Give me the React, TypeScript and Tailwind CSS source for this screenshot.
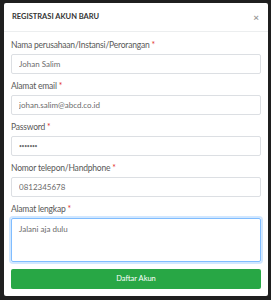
const FIELDS = [
  { label: "Nama perusahaan/Instansi/Perorangan", value: "Johan Salim", type: "text" },
  { label: "Alamat email", value: "johan.salim@abcd.co.id", type: "text" },
  { label: "Password", value: "1234567", type: "password" },
  { label: "Nomor telepon/Handphone", value: "0812345678", type: "text" },
];

function Label({ text }: { text: string }) {
  return (
    <label className="mb-[3px] block h-3 text-[8.5px] leading-3 tracking-[-0.2px] text-[#585858]">
      {text} <span className="text-[#e3342f]">*</span>
    </label>
  );
}

export default function App() {
  return (
    <div className="h-[300px] w-[271px] bg-[#1f1f1f] pl-1 pt-[3px] font-['Lato',sans-serif]">
      <div className="w-[264px] rounded-[2px] bg-white">
        <div className="flex h-[29px] items-center justify-between border-b border-[#eceeef] pl-2 pr-[9px]">
          <h2 className="text-[7.5px] font-bold text-[#333]">REGISTRASI AKUN BARU</h2>
          <span className="text-[10px] font-bold leading-none text-[#999]">×</span>
        </div>
        <div className="flex flex-col gap-[6px] px-[7px] pb-[7px] pt-[7px]">
          {FIELDS.map((f) => (
            <div key={f.label}>
              <Label text={f.label} />
              <input
                type={f.type}
                defaultValue={f.value}
                className={`block h-5 w-full rounded-[2px] border border-[#dcdfe3] px-[7px] text-[#6b6b6b] outline-none ${
                  f.type === "password" ? "text-[5px] tracking-[-0.3px]" : "text-[8px]"
                }`}
              />
            </div>
          ))}
          <div>
            <Label text="Alamat lengkap" />
            <textarea
              defaultValue="Jalani aja dulu"
              className="block h-[44px] w-full resize-none rounded-[2px] border border-[#80bdff] px-[7px] py-[4px] text-[8px] text-[#6b6b6b] shadow-[0_0_0_2px_rgba(0,123,255,0.18)] outline-none"
            />
          </div>
          <button className="mt-px h-5 w-full rounded-[2px] bg-[#28a745] text-[7.5px] text-white">
            Daftar Akun
          </button>
        </div>
      </div>
    </div>
  );
}
